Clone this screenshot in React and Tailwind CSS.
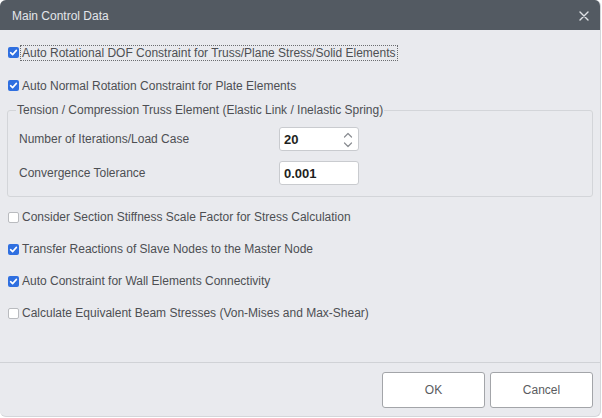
import React, { useState } from "react";

const font = { fontFamily: '"Liberation Sans", Arial, sans-serif' };

function CheckBox({ checked, onChange }) {
  return (
    <span
      onClick={onChange}
      className={
        "flex h-[11px] w-[11px] shrink-0 items-center justify-center rounded-[2px] " +
        (checked ? "bg-[#2f6fe0]" : "border border-[#b9bbbf] bg-white")
      }
    >
      {checked && (
        <svg width="9" height="9" viewBox="0 0 9 9" fill="none">
          <path d="M1.6 4.7 L3.6 6.6 L7.4 2.4" stroke="white" strokeWidth="1.6" strokeLinecap="round" strokeLinejoin="round" />
        </svg>
      )}
    </span>
  );
}

function CheckRow({ label, checked, onToggle, focused, height = "h-[33px]" }) {
  return (
    <div className={`flex items-center ${height}`}>
      <label className="flex items-center gap-[2px] pl-[8px] cursor-default">
        <CheckBox checked={checked} onChange={onToggle} />
        <span
          className={
            "px-[1px] text-[12px] leading-[14px] text-[#4d4f53] " +
            (focused ? "outline outline-1 outline-dotted outline-[#6b6d70]" : "")
          }
        >
          {label}
        </span>
      </label>
    </div>
  );
}

function Chevrons() {
  return (
    <svg width="10" height="18" viewBox="0 0 10 18" fill="none" className="absolute right-[5px] top-[3px]">
      <path d="M1.5 6 L5 2.5 L8.5 6" stroke="#8a8d92" strokeWidth="1.2" strokeLinecap="round" strokeLinejoin="round" />
      <path d="M1.5 12 L5 15.5 L8.5 12" stroke="#8a8d92" strokeWidth="1.2" strokeLinecap="round" strokeLinejoin="round" />
    </svg>
  );
}

export default function App() {
  const [checks, setChecks] = useState({
    rot: true,
    normal: true,
    section: false,
    transfer: true,
    wall: true,
    beam: false,
  });
  const toggle = (k) => setChecks((p) => ({ ...p, [k]: !p[k] }));

  return (
    <div className="h-[418px] w-[602px] bg-white" style={font}>
      <div className="flex h-[417px] w-[601px] flex-col overflow-hidden rounded-[6px] border-r border-b border-[#d4d6da] bg-[#e9eaee]">
        {/* Title bar */}
        <div className="flex h-[30px] shrink-0 items-center justify-between bg-[#535a62] pl-[12px] pr-[11px] pt-[1px]">
          <span className="text-[12px] text-[#e3e6ea]">Main Control Data</span>
          <svg width="10" height="10" viewBox="0 0 10 10">
            <path d="M1 1 L9 9 M9 1 L1 9" stroke="#dfe2e6" strokeWidth="1.4" strokeLinecap="round" />
          </svg>
        </div>

        {/* Body */}
        <div className="flex-1 pt-[6px]">
          <CheckRow
            label="Auto Rotational DOF Constraint for Truss/Plane Stress/Solid Elements"
            checked={checks.rot}
            onToggle={() => toggle("rot")}
            focused
          />
          <CheckRow
            label="Auto Normal Rotation Constraint for Plate Elements"
            checked={checks.normal}
            onToggle={() => toggle("normal")}
          />

          <fieldset className="mx-[7px] mt-[1px] rounded-[3px] border border-[#d3d5d9] px-[11px] pb-[11px] pt-[10px]">
            <legend className="-ml-[3px] px-[1px] text-[12px] leading-[14px] text-[#4d4f53]">
              Tension / Compression Truss Element (Elastic Link / Inelastic Spring)
            </legend>
            <div className="flex flex-col gap-[10px]">
              <div className="flex items-center">
                <span className="w-[260px] text-[12px] text-[#4d4f53]">Number of Iterations/Load Case</span>
                <div className="relative flex h-[24px] w-[80px] items-center rounded-[3px] border border-[#c9cbcf] bg-white pl-[4px]">
                  <span className="text-[13px] font-bold leading-[15px] text-[#1e1f21]">20</span>
                  <Chevrons />
                </div>
              </div>
              <div className="flex items-center">
                <span className="w-[260px] text-[12px] text-[#4d4f53]">Convergence Tolerance</span>
                <div className="flex h-[24px] w-[80px] items-center rounded-[3px] border border-[#c9cbcf] bg-white pl-[4px]">
                  <span className="text-[13px] font-bold leading-[15px] text-[#1e1f21]">0.001</span>
                </div>
              </div>
            </div>
          </fieldset>

          <div className="mt-[4px]">
            <CheckRow
              height="h-[32px]"
              label="Consider Section Stiffness Scale Factor for Stress Calculation"
              checked={checks.section}
              onToggle={() => toggle("section")}
            />
            <CheckRow
              height="h-[32px]"
              label="Transfer Reactions of Slave Nodes to the Master Node"
              checked={checks.transfer}
              onToggle={() => toggle("transfer")}
            />
            <CheckRow
              height="h-[32px]"
              label="Auto Constraint for Wall Elements Connectivity"
              checked={checks.wall}
              onToggle={() => toggle("wall")}
            />
            <CheckRow
              height="h-[32px]"
              label="Calculate Equivalent Beam Stresses (Von-Mises and Max-Shear)"
              checked={checks.beam}
              onToggle={() => toggle("beam")}
            />
          </div>
        </div>

        {/* Footer */}
        <div className="flex h-[54px] shrink-0 justify-end gap-[5px] border-t border-[#d0d2d6] pr-[7px] pt-[9px]">
          <button className="h-[36px] w-[103px] rounded-[3px] border border-[#a3a5a9] bg-white text-[12px] text-[#5a5c60]">
            OK
          </button>
          <button className="h-[36px] w-[103px] rounded-[3px] border border-[#a3a5a9] bg-white text-[12px] text-[#5a5c60]">
            Cancel
          </button>
        </div>
      </div>
    </div>
  );
}
